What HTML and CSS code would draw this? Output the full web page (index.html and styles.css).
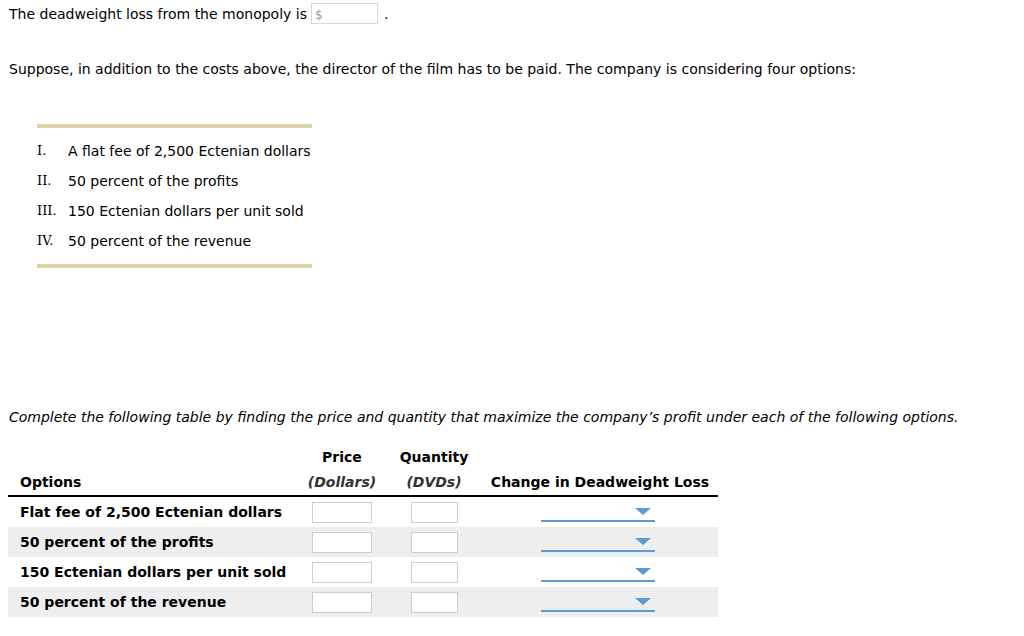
FILE: index.html
```html
<!DOCTYPE html>
<html>
<head>
<meta charset="utf-8">
<link rel="stylesheet" href="styles.css">
</head>
<body>
<p class="line first">The deadweight loss from the monopoly is <span class="money"><span class="dollar">$</span></span> <span class="dot">.</span></p>
<p class="line suppose">Suppose, in addition to the costs above, the director of the film has to be paid. The company is considering four options:</p>
<div class="optlist">
  <div class="bar"></div>
  <ol class="items">
    <li><span class="num">I.</span><span>A flat fee of 2,500 Ectenian dollars</span></li>
    <li><span class="num">II.</span><span>50 percent of the profits</span></li>
    <li><span class="num">III.</span><span>150 Ectenian dollars per unit sold</span></li>
    <li><span class="num">IV.</span><span>50 percent of the revenue</span></li>
  </ol>
  <div class="bar"></div>
</div>
<p class="line complete">Complete the following table by finding the price and quantity that maximize the company’s profit under each of the following options.</p>
<table class="grid">
  <thead>
    <tr class="h1"><th class="opt"></th><th class="pc">Price</th><th class="qc">Quantity</th><th class="dc"></th></tr>
    <tr class="h2"><th class="opt">Options</th><th class="pc"><i>(Dollars)</i></th><th class="qc"><i>(DVDs)</i></th><th class="dc">Change in Deadweight Loss</th></tr>
  </thead>
  <tbody>
    <tr><td class="opt">Flat fee of 2,500 Ectenian dollars</td><td class="pc"><span class="box pbox"></span></td><td class="qc"><span class="box qbox"></span></td><td class="dc"><span class="sel"><span class="tri"></span></span></td></tr>
    <tr class="alt"><td class="opt">50 percent of the profits</td><td class="pc"><span class="box pbox"></span></td><td class="qc"><span class="box qbox"></span></td><td class="dc"><span class="sel"><span class="tri"></span></span></td></tr>
    <tr><td class="opt">150 Ectenian dollars per unit sold</td><td class="pc"><span class="box pbox"></span></td><td class="qc"><span class="box qbox"></span></td><td class="dc"><span class="sel"><span class="tri"></span></span></td></tr>
    <tr class="alt"><td class="opt">50 percent of the revenue</td><td class="pc"><span class="box pbox"></span></td><td class="qc"><span class="box qbox"></span></td><td class="dc"><span class="sel"><span class="tri"></span></span></td></tr>
  </tbody>
</table>
</body>
</html>
```
FILE: styles.css
```css
html, body { margin: 0; padding: 0; background: #fff; }
body {
  font-family: "DejaVu Sans", Verdana, sans-serif;
  font-size: 14px;
  color: #000;
  padding: 0 0 0 9px;
}
.line { margin: 0; line-height: 20px; }
.first { padding-top: 3px; display: flex; align-items: center; }
.money {
  display: inline-block;
  width: 65px; height: 19px;
  border: 1px solid #d6d6d6;
  margin-left: 4px;
  position: relative;
  box-sizing: content-box;
}
.dollar { position: absolute; left: 3px; top: 1px; color: #999; font-size: 12px; }
.dot { margin-left: 6px; }
.suppose { margin-top: 35px; }
.optlist { margin: 45px 0 0 28px; width: 275px; }
.bar { height: 4px; background: #dbd2a7; }
.items { list-style: none; margin: 0; padding: 8px 0 8px 0; }
.items li { height: 30px; line-height: 30px; display: flex; }
.num { font-family: "DejaVu Serif", Verdana, serif; font-size: 13px; width: 31px; }
.complete { margin-top: 139px; font-style: italic; }
.grid { border-collapse: collapse; margin-top: 17px; margin-left: -1px; width: 710px; }
.grid th { font-weight: bold; padding: 0; }
.h1 th { height: 22px; vertical-align: bottom; line-height: 18px; }
.h2 th { height: 25px; line-height: 18px; vertical-align: bottom; padding-bottom: 4px; }
.h2 th i { font-weight: bold; color: #333; }
thead tr.h2 { border-bottom: 2px solid #000; }
.grid td { height: 30px; padding: 0; vertical-align: middle; }
.grid td.opt { font-weight: bold; padding-left: 12px; }
.grid th.opt { text-align: left; padding-left: 12px; }
.alt td { background: #eeeeee; }
.opt { width: 278px; }
.pc { width: 88px; text-align: center; }
.qc { width: 96px; text-align: center; }
.dc { text-align: center; }
.grid td.dc { vertical-align: top; }
.box { display: inline-block; height: 19px; border: 1px solid #cdcdcd; background: #fff; vertical-align: middle; }
.pbox { width: 58px; }
.qbox { width: 45px; }
.sel {
  display: inline-block;
  width: 114px; height: 23px;
  border-bottom: 2px solid #5b9bd0;
  position: relative;
  vertical-align: top;
  margin-left: -4px;
}
.tri {
  position: absolute; right: 4px; top: 11px;
  width: 0; height: 0;
  border-left: 8px solid transparent;
  border-right: 8px solid transparent;
  border-top: 7px solid #5b9bd0;
}
```
